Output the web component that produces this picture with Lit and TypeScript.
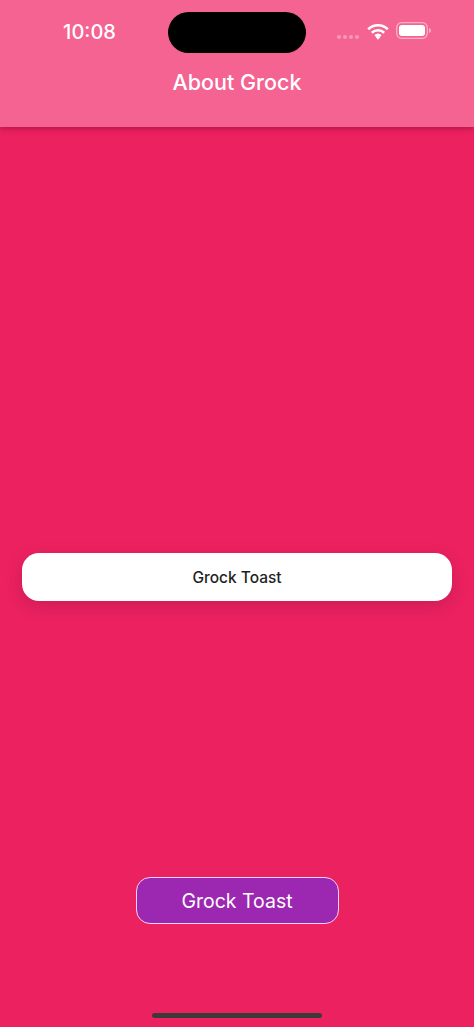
import { LitElement, html, css } from "lit";
import { customElement } from "lit/decorators.js";

@customElement("app-root")
export class AppRoot extends LitElement {
  static styles = css`
    :host {
      display: flex;
      flex-direction: column;
      width: 474px;
      height: 1027px;
      overflow: hidden;
      background: #ec2160;
      font-family: Inter, "Liberation Sans", sans-serif;
      -webkit-font-smoothing: antialiased;
    }
    .header {
      flex: none;
      height: 127px;
      box-sizing: border-box;
      padding-top: 12px;
      background: #f46391;
      box-shadow: 0 2px 5px rgba(120, 10, 50, 0.45);
      position: relative;
      z-index: 1;
      color: #fff;
    }
    .status {
      display: grid;
      grid-template-columns: 168px 138px 1fr;
      height: 41px;
    }
    .time {
      font-size: 20px;
      font-weight: 500;
      line-height: 41px;
      text-align: center;
      padding-left: 11px;
    }
    .island {
      background: #000;
      border-radius: 21px;
    }
    .indicators {
      display: flex;
      align-items: center;
      padding-left: 31px;
    }
    .dots {
      display: flex;
      gap: 2px;
      margin-top: 8px;
      margin-right: 8px;
    }
    .dot {
      width: 4px;
      height: 4px;
      border-radius: 50%;
      background: rgba(255, 255, 255, 0.35);
    }
    .wifi {
      width: 22px;
      height: 17px;
      margin-right: 7px;
      margin-top: -3px;
    }
    .battery {
      width: 36px;
      height: 17px;
      margin-top: -4px;
    }
    .title {
      margin-top: 14px;
      font-size: 21.5px;
      font-weight: 500;
      line-height: 30px;
      text-align: center;
    }
    .body {
      flex: 1;
      display: flex;
      flex-direction: column;
      align-items: center;
      padding-top: 426px;
    }
    .toast {
      width: 430px;
      height: 48px;
      display: flex;
      align-items: center;
      justify-content: center;
      background: #fff;
      border-radius: 17px;
      box-shadow: 0 5px 16px rgba(90, 20, 60, 0.22);
      color: #1f1f1f;
      font-size: 15.5px;
      font-weight: 500;
    }
    .action {
      margin-top: 276px;
      width: 203px;
      height: 47px;
      box-sizing: border-box;
      display: flex;
      align-items: center;
      justify-content: center;
      background: #9c27b0;
      border: 1px solid #fbd3ee;
      border-radius: 14px;
      color: #fff;
      font-size: 19.5px;
      font-weight: 400;
    }
    .home {
      margin-top: 89px;
      width: 170px;
      height: 5px;
      border-radius: 3px;
      background: #40393c;
    }
  `;

  render() {
    return html`
      <div class="header">
        <div class="status">
          <div class="time">10:08</div>
          <div class="island"></div>
          <div class="indicators">
            <div class="dots">
              <span class="dot"></span><span class="dot"></span><span class="dot"></span><span class="dot"></span>
            </div>
            <svg class="wifi" viewBox="0 0 22 17" fill="none" stroke="#fff" stroke-width="2.6">
              <path d="M1.2 6.2a14 14 0 0 1 19.6 0" />
              <path d="M4.8 9.8a9 9 0 0 1 12.4 0" />
              <path d="M8.2 13a4.2 4.2 0 0 1 5.6 0" />
              <path d="M11 16.8l-2.4-2.7a3.4 3.4 0 0 1 4.8 0z" fill="#fff" stroke="none" />
            </svg>
            <svg class="battery" viewBox="0 0 36 17" fill="none">
              <rect x="0.7" y="0.7" width="30.6" height="15.6" rx="5" stroke="#fff" stroke-opacity="0.5" stroke-width="1.3" />
              <rect x="3" y="3" width="26" height="11" rx="3" fill="#fff" />
              <path d="M33 6v5c1-.3 2-1.3 2-2.5S34 6.300 33 6z" fill="#fff" fill-opacity="0.5" />
            </svg>
          </div>
        </div>
        <div class="title">About Grock</div>
      </div>
      <div class="body">
        <div class="toast">Grock Toast</div>
        <div class="action">Grock Toast</div>
        <div class="home"></div>
      </div>
    `;
  }
}
